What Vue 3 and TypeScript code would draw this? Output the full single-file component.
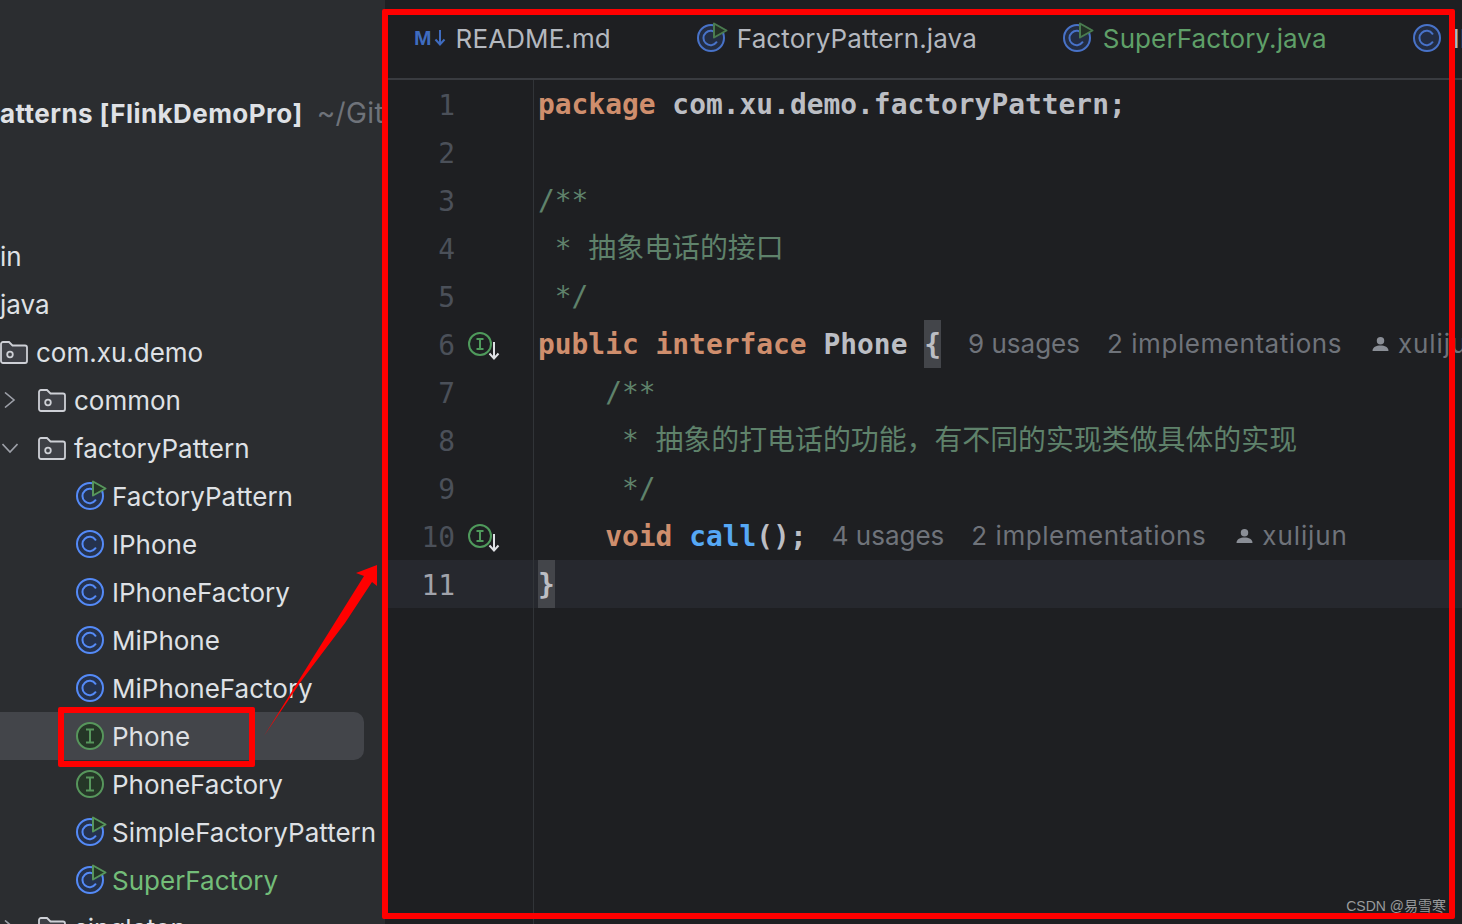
<script setup lang="ts">
type Kind = 'class' | 'run' | 'iface'
interface TreeRow {
  label: string
  depth?: 'd0' | 'd1' | 'd2' | 'd3'
  chevron?: 'right' | 'down'
  folder?: boolean
  icon?: Kind
  selected?: boolean
  green?: boolean
}
const tree: TreeRow[] = [
  { label: 'in', depth: 'd0' },
  { label: 'java', depth: 'd0' },
  { label: 'com.xu.demo', depth: 'd1', folder: true },
  { label: 'common', depth: 'd2', chevron: 'right', folder: true },
  { label: 'factoryPattern', depth: 'd2', chevron: 'down', folder: true },
  { label: 'FactoryPattern', depth: 'd3', icon: 'run' },
  { label: 'IPhone', depth: 'd3', icon: 'class' },
  { label: 'IPhoneFactory', depth: 'd3', icon: 'class' },
  { label: 'MiPhone', depth: 'd3', icon: 'class' },
  { label: 'MiPhoneFactory', depth: 'd3', icon: 'class' },
  { label: 'Phone', depth: 'd3', icon: 'iface', selected: true },
  { label: 'PhoneFactory', depth: 'd3', icon: 'iface' },
  { label: 'SimpleFactoryPattern', depth: 'd3', icon: 'run' },
  { label: 'SuperFactory', depth: 'd3', icon: 'run', green: true },
  { label: 'singleton', depth: 'd2', chevron: 'right', folder: true },
]
const tabs = [
  { label: 'FactoryPattern.java', icon: 'run' as Kind, green: false },
  { label: 'SuperFactory.java', icon: 'run' as Kind, green: true },
  { label: 'IPhone.java', icon: 'class' as Kind, green: false },
]
const plainLines: Record<number, string> = {
  3: '/**',
  4: ' * 抽象电话的接口',
  5: ' */',
  7: '    /**',
  8: '     * 抽象的打电话的功能，有不同的实现类做具体的实现',
  9: '     */',
}
const lineNumbers = [1, 2, 3, 4, 5, 6, 7, 8, 9, 10, 11]
</script>

<template>
  <div class="screen">
    <svg class="defs" width="0" height="0" aria-hidden="true">
      <defs>
        <symbol id="ic-class" viewBox="0 0 32 32">
          <circle cx="15" cy="16" r="13" fill="#25324d" stroke="#548af7" stroke-width="2" />
          <path d="M20.5 11.8A7.2 7.2 0 1 0 20.500 20.2" fill="none" stroke="#548af7" stroke-width="2" stroke-linecap="round" />
        </symbol>
        <symbol id="ic-run" viewBox="0 0 32 32">
          <circle cx="15" cy="16" r="13" fill="#25324d" stroke="#548af7" stroke-width="2" />
          <path d="M20.5 11.8A7.2 7.2 0 1 0 20.500 20.2" fill="none" stroke="#548af7" stroke-width="2" stroke-linecap="round" />
          <path d="M18 1.5 L30.5 8.5 L18 15.5 Z" fill="#253627" stroke="#57965c" stroke-width="2" stroke-linejoin="round" />
        </symbol>
        <symbol id="ic-iface" viewBox="0 0 32 32">
          <circle cx="15" cy="16" r="13" fill="#253627" stroke="#57965c" stroke-width="2" />
          <path d="M11 9.5H19M15 9.5V22.5M11 22.5H19" fill="none" stroke="#57965c" stroke-width="2" />
        </symbol>
      </defs>
    </svg>

    <aside class="sidebar">
      <div class="project">
        <b>atterns [FlinkDemoPro]</b>
        <span class="path">~/Git</span>
      </div>
      <div class="tree">
        <div
          v-for="row in tree"
          :key="row.label"
          class="row"
          :class="[row.depth, { selected: row.selected, green: row.green }]"
        >
          <svg v-if="row.chevron" class="chevron" viewBox="0 0 16 16">
            <path v-if="row.chevron === 'right'" d="M3 0.500L12 8L3 15.500" />
            <path v-else d="M0.500 4L8 12L15.500 4" />
          </svg>
          <svg v-if="row.folder" class="folder" viewBox="0 0 28 24">
            <path d="M1 4a2 2 0 0 1 2-2h6l3.5 3.500H25a2 2 0 0 1 2 2V21a2 2 0 0 1-2 2H3a2 2 0 0 1-2-2Z" fill="#3e4046" stroke="#ced0d6" stroke-width="1.800" />
            <circle cx="10" cy="14.500" r="2.800" fill="none" stroke="#ced0d6" stroke-width="1.800" />
          </svg>
          <svg v-if="row.icon" class="node-icon"><use :href="`#ic-${row.icon}`" /></svg>
          <span class="label">{{ row.label }}</span>
        </div>
      </div>
    </aside>

    <main class="editor">
      <nav class="tabs">
        <div class="tab">
          <span class="md">M<svg viewBox="0 0 12 18"><path d="M6 1V15M1.500 10.500L6 15.500L10.500 10.500" /></svg></span>
          <span>README.md</span>
        </div>
        <div v-for="tab in tabs" :key="tab.label" class="tab" :class="{ green: tab.green }">
          <svg class="tab-icon"><use :href="`#ic-${tab.icon}`" /></svg>
          <span>{{ tab.label }}</span>
        </div>
      </nav>

      <section class="body">
        <div v-for="n in lineNumbers" :key="n" class="line" :class="{ current: n === 11 }">
          <div class="gutter">
            <span class="num">{{ n }}</span>
            <svg v-if="n === 6 || n === 10" class="mark" viewBox="0 0 36 36">
              <circle cx="13" cy="13" r="11" fill="none" stroke="#4f9a5c" stroke-width="2" />
              <path d="M9.500 8H16.500M13 8V18M9.500 18H16.500" fill="none" stroke="#4f9a5c" stroke-width="2" />
              <path d="M27 11V27M22.500 22.500L27 27.500L31.500 22.500" fill="none" stroke="#dfe1e5" stroke-width="2" />
            </svg>
          </div>
          <div class="code">
            <template v-if="n === 1"><span class="kw">package</span><span class="id">{{ ' com.xu.demo.factoryPattern;' }}</span></template>
            <span v-else-if="plainLines[n]" class="comment">{{ plainLines[n] }}</span>
            <template v-else-if="n === 6">
              <span class="kw">public interface</span><span class="id">{{ ' Phone ' }}</span><span class="id brace">{</span>
              <span class="hint first">9 usages</span>
              <span class="hint impl">2 implementations</span>
              <span class="hint author"><svg viewBox="0 0 16 16"><circle cx="8" cy="4.500" r="3.500" /><path d="M0.500 14c0-3.500 3.500-5 7.500-5s7.500 1.500 7.500 5Z" /></svg>xulijun</span>
            </template>
            <template v-else-if="n === 10">
              <span class="kw">{{ '    void' }}</span><span class="id">{{ ' ' }}</span><span class="fn">call</span><span class="id">();</span>
              <span class="hint tight">4 usages</span>
              <span class="hint impl">2 implementations</span>
              <span class="hint author"><svg viewBox="0 0 16 16"><circle cx="8" cy="4.500" r="3.500" /><path d="M0.500 14c0-3.500 3.500-5 7.500-5s7.500 1.500 7.500 5Z" /></svg>xulijun</span>
            </template>
            <span v-else-if="n === 11" class="id brace">}</span>
          </div>
        </div>
        <div class="filler"><div class="gutter"></div></div>
      </section>
    </main>

    <div class="mark-box big"></div>
    <div class="mark-box small"></div>
    <svg class="arrow" viewBox="0 0 1462 924">
      <polygon points="377,565 356,573 364,576 264,736 302,680 345,623 372,582 377,586" fill="#ff0000" />
    </svg>
    <div class="watermark">CSDN @易雪寒</div>
  </div>
</template>

<style>
html, body { margin: 0; background: #1e1f22; }
</style>

<style scoped>
.screen {
  position: relative;
  display: flex;
  width: 1462px;
  height: 924px;
  overflow: hidden;
  font-family: Inter, "Noto Sans CJK SC", sans-serif;
  background: #1e1f22;
}
.defs { position: absolute; }

.sidebar {
  flex: 0 0 385px;
  height: 924px;
  padding-top: 88px;
  box-sizing: border-box;
  overflow: hidden;
  background: #2b2d30;
  color: #dfe1e5;
  font-size: 26px;
}
.project {
  height: 48px;
  line-height: 50px;
  white-space: nowrap;
  margin-bottom: 96px;
}
.project b { font-weight: 700; letter-spacing: 0.43px; }
.path { margin-left: 14px; color: #6f737a; font-size: 28px; letter-spacing: 0.4px; }
.tree { width: 364px; }
.row {
  display: flex;
  align-items: center;
  height: 48px;
  position: relative;
  white-space: nowrap;
}
.row.selected { background: #43454a; border-radius: 0 10px 10px 0; }
.row.green .label { color: #73bd79; }
.d0 { padding-left: 0; }
.d1 { padding-left: 0; }
.d2 { padding-left: 38px; }
.d3 { padding-left: 75px; }
.chevron {
  position: absolute;
  left: 2px;
  top: 16px;
  width: 16px;
  height: 16px;
  fill: none;
  stroke: #9da0a8;
  stroke-width: 1.6;
}
.folder { width: 28px; height: 24px; margin-right: 8px; flex: none; }
.node-icon { width: 32px; height: 32px; margin-right: 5px; flex: none; }

.editor {
  flex: 1;
  display: flex;
  flex-direction: column;
  min-width: 0;
  height: 924px;
  background: #1e1f22;
}
.tabs {
  display: flex;
  align-items: center;
  gap: 85px;
  flex: 0 0 78px;
  box-sizing: content-box;
  padding: 0 0 0 29px;
  border-bottom: 2px solid #393b40;
  color: #b4b8bf;
  font-size: 26px;
  letter-spacing: 0.1px;
  white-space: nowrap;
  overflow: hidden;
}
.tab { display: flex; align-items: center; flex: none; position: relative; top: -1px; }
.tab.green { color: #5f9f68; }
.md {
  display: flex;
  align-items: center;
  margin-right: 10px;
  font: bold 21px "Liberation Sans", sans-serif;
  color: #3f6cc0;
}
.md svg {
  width: 12px;
  height: 18px;
  margin-left: 2px;
  fill: none;
  stroke: #3f6cc0;
  stroke-width: 2;
}
.tab-icon { width: 32px; height: 32px; margin-right: 9px; opacity: 0.78; flex: none; }

.body { flex: 1; display: flex; flex-direction: column; min-height: 0; }
.line { display: flex; height: 48px; flex: none; }
.line.current { background: #26282e; }
.gutter {
  position: relative;
  flex: 0 0 148px;
  border-right: 1px solid #313438;
  box-sizing: content-box;
  width: 148px;
}
.num {
  position: absolute;
  right: 78px;
  top: 0;
  font: 27.9px/51px "DejaVu Sans Mono", monospace;
  color: #4b5059;
}
.current .num { color: #a1a3ab; }
.mark { position: absolute; left: 82px; top: 11px; width: 36px; height: 36px; }
.code {
  flex: 1;
  min-width: 0;
  padding-left: 4px;
  display: flex;
  align-items: stretch;
  white-space: pre;
  font: 27.9px/50px "DejaVu Sans Mono", "Noto Sans CJK SC", monospace;
  overflow: hidden;
}
.kw { color: #cf8e6d; font-weight: 700; }
.id { color: #bcbec4; font-weight: 700; }
.fn { color: #56a8f5; font-weight: 700; }
.comment { color: #5f826b; }
.brace { background: #43454a; height: 48px; }
.hint {
  margin-left: 27px;
  font: 26px/50px Inter, sans-serif;
  color: #6f737a;
  display: inline-flex;
  align-items: center;
  flex: none;
}
.hint.first { margin-left: 27px; }
.hint.tight { margin-left: 25px; }
.impl { letter-spacing: 0.55px; }
.author { letter-spacing: 0.9px; }
.author svg {
  width: 17px;
  height: 17px;
  margin: 0 9px 0 3px;
  fill: #8a8e96;
}
.filler { flex: 1; display: flex; min-height: 0; }

.mark-box {
  position: absolute;
  box-sizing: border-box;
  border: 6px solid #ff0000;
  border-radius: 2px;
}
.big { left: 382px; top: 9px; width: 1073px; height: 910px; }
.small { left: 58px; top: 707px; width: 197px; height: 60px; }
.arrow { position: absolute; left: 0; top: 0; width: 1462px; height: 924px; pointer-events: none; }
.watermark {
  position: absolute;
  right: 16px;
  bottom: 9px;
  font: 14px/18px "Liberation Sans", "Noto Sans CJK SC", sans-serif;
  color: #9a9b9d;
}
</style>
